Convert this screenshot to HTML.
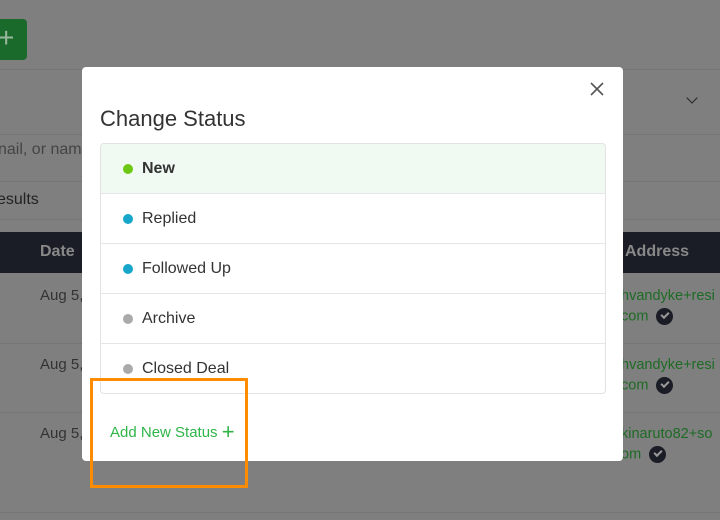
<!DOCTYPE html>
<html><head><style>
body{margin:0;width:720px;height:520px;overflow:hidden;background:#7f7f7f;font-family:"Liberation Sans",sans-serif;position:relative}
.a{position:absolute}
.t{color:#3a3a3a;font-size:15px}
.g{color:#1e6b25;font-size:14.5px}
.chk{display:inline-block;width:17px;height:17px;border-radius:50%;background:#1a1d26;vertical-align:middle;margin-left:8px;position:relative}
.chk:after{content:"";position:absolute;left:5px;top:4px;width:6px;height:3px;border-left:2px solid #999;border-bottom:2px solid #999;transform:rotate(-45deg)}
.row{position:absolute;left:0;right:0;height:49px;border-bottom:1px solid #e6e6e6;display:flex;align-items:center;font-size:16px;color:#333}
.dot{width:10px;height:10px;border-radius:50%;margin:0 9px 0 22px}
</style></head><body>
<div class="a" style="left:0;top:19px;width:27px;height:41px;background:#1a6a2b;border-radius:0 4px 4px 0"></div>
<div class="a" style="left:-2px;top:22px;color:#9ab89f;font-size:28px">+</div>
<div class="a" style="left:0;top:69px;width:720px;height:1px;background:#767676"></div>
<div class="a" style="left:688px;top:94px;width:7px;height:7px;border-right:1.5px solid #222;border-bottom:1.5px solid #222;transform:rotate(45deg)"></div>
<div class="a" style="left:0;top:134px;width:720px;height:1px;background:#767676"></div>
<div class="a t" style="left:-2px;top:141px;color:#444;font-size:16px">nail, or name</div>
<div class="a" style="left:0;top:181px;width:720px;height:1px;background:#767676"></div>
<div class="a t" style="left:-3px;top:191px;color:#222;font-size:16px">esults</div>
<div class="a" style="left:0;top:219px;width:720px;height:1px;background:#767676"></div>
<div class="a" style="left:0;top:232px;width:720px;height:41px;background:#1a1d26"></div>
<div class="a" style="left:40px;top:243px;color:#888;font-weight:bold;font-size:16px">Date</div>
<div class="a" style="left:625px;top:243px;color:#888;font-weight:bold;font-size:16px">Address</div>
<div class="a t" style="left:40px;top:287px;color:#333">Aug 5,</div>
<div class="a t" style="left:40px;top:356px;color:#333">Aug 5,</div>
<div class="a t" style="left:40px;top:425px;color:#333">Aug 5,</div>
<div class="a" style="left:0;top:343px;width:720px;height:1px;background:#767676"></div>
<div class="a" style="left:0;top:412px;width:720px;height:1px;background:#767676"></div>
<div class="a" style="left:0;top:512px;width:720px;height:1px;background:#767676"></div>
<div class="a g" style="left:621px;top:288px">hvandyke+resi</div>
<div class="a g" style="left:621px;top:308px">com<span class="chk"></span></div>
<div class="a g" style="left:621px;top:357px">hvandyke+resi</div>
<div class="a g" style="left:621px;top:377px">com<span class="chk"></span></div>
<div class="a g" style="left:621px;top:426px">kinaruto82+so</div>
<div class="a g" style="left:621px;top:446px">om<span class="chk"></span></div>

<div class="a" style="left:82px;top:67px;width:541px;height:394px;background:#fff;border-radius:4px">
 <svg class="a" style="left:508px;top:15px" width="14" height="14"><path d="M1 1L13 13M13 1L1 13" stroke="#555" stroke-width="1.6"/></svg>
 <div class="a" style="left:18px;top:39px;font-size:22px;color:#333">Change Status</div>
 <div class="a" style="left:18px;top:76px;width:504px;height:249px;border:1px solid #e2e2e2;border-radius:4px;overflow:hidden">
  <div class="row" style="top:0;background:#f1faf2;font-weight:bold"><span class="dot" style="background:#6cc814"></span>New</div>
  <div class="row" style="top:50px"><span class="dot" style="background:#17a6c9"></span>Replied</div>
  <div class="row" style="top:100px"><span class="dot" style="background:#17a6c9"></span>Followed Up</div>
  <div class="row" style="top:150px"><span class="dot" style="background:#aaa"></span>Archive</div>
  <div class="row" style="top:200px;border:0"><span class="dot" style="background:#aaa"></span>Closed Deal</div>
 </div>
 <div class="a" style="left:28px;top:352px;color:#2fb548;font-size:15px">Add New Status <span style="font-size:22px;vertical-align:-2px">+</span></div>
</div>
<div class="a" style="left:90px;top:378px;width:152px;height:104px;border:3px solid #ff8c00"></div>
</body></html>
